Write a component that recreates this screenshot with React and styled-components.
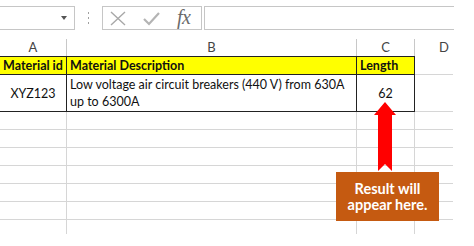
import React from "react";
import styled, { createGlobalStyle } from "styled-components";

const Global = createGlobalStyle`
  html, body { margin: 0; padding: 0; background: #fff; }
  body { font-family: Lato, "Liberation Sans", sans-serif; }
`;

const Page = styled.div`
  position: relative;
  width: 474px;
  height: 246px;
  overflow: hidden;
  background: #fff;
`;

const FormulaBar = styled.div`
  height: 39px;
  display: flex;
  align-items: flex-start;
  padding-top: 6px;
  box-sizing: border-box;
`;

const NameBox = styled.div`
  width: 75px;
  height: 24px;
  box-sizing: border-box;
  border: 1px solid #c6c6c6;
  border-left: none;
  display: flex;
  align-items: center;
  justify-content: flex-end;
  padding-right: 7px;
`;

const DropArrow = styled.span`
  width: 0;
  height: 0;
  border-left: 3.5px solid transparent;
  border-right: 3.5px solid transparent;
  border-top: 4px solid #555;
`;

const Grip = styled.div`
  width: 27px;
  height: 24px;
  display: flex;
  flex-direction: column;
  align-items: center;
  justify-content: center;
  gap: 3px;
`;

const GripDot = styled.span`
  width: 1px;
  height: 2px;
  background: #a0a0a0;
`;

const ButtonBox = styled.div`
  width: 100px;
  height: 24px;
  box-sizing: border-box;
  border: 1px solid #c6c6c6;
  display: flex;
  align-items: center;
  padding-left: 7px;
  gap: 17px;
`;

const Fx = styled.span`
  font-family: "Liberation Serif", "DejaVu Serif", serif;
  font-style: italic;
  font-size: 20px;
  color: #6b6b6b;
  line-height: 1;
  margin-left: 0px;
  margin-top: -3px;
  letter-spacing: -0.5px;
`;

const FormulaInput = styled.div`
  width: 250px;
  height: 24px;
  margin-left: 2px;
  box-sizing: border-box;
  border-top: 1px solid #c6c6c6;
  border-bottom: 1px solid #c6c6c6;
  border-left: 1px solid #c6c6c6;
`;

const Sheet = styled.div`
  display: grid;
  grid-template-columns: 67px 290px 58px 38px;
  width: 453px;
`;

const ColHead = styled.div`
  height: 17px;
  box-sizing: border-box;
  border-right: ${(p) => (p.$last ? "none" : "1px solid #c8c8c8")};
  font-size: 13px;
  color: #444;
  display: flex;
  align-items: center;
  justify-content: center;
  padding-left: ${(p) => p.$pad || 0}px;
  line-height: 1;
`;

const Cell = styled.div`
  box-sizing: border-box;
  height: ${(p) => p.$h}px;
  background: ${(p) => (p.$yellow ? "#ffff00" : "#fff")};
  border-top: ${(p) => (p.$top ? "1px solid #222" : "none")};
  border-right: ${(p) =>
    p.$noRight ? "none" : p.$darkRight ? "1px solid #222" : "1px solid #d6d6d6"};
  border-bottom: ${(p) =>
    p.$noBottom ? "none" : p.$darkBottom ? "1px solid #222" : "1px solid #d6d6d6"};
  font-size: 12.5px;
  font-weight: ${(p) => (p.$bold ? 700 : 400)};
  color: #111;
  display: flex;
  align-items: center;
  justify-content: ${(p) => (p.$center ? "center" : "flex-start")};
  padding: 0 3px;
  line-height: 17px;
  white-space: nowrap;
  overflow: hidden;
`;

const Callout = styled.div`
  position: absolute;
  left: 336px;
  top: 172px;
  width: 103px;
  height: 49px;
  background: #c55a11;
  color: #fff;
  font-weight: 700;
  font-size: 14.5px;
  line-height: 16px;
  display: flex;
  align-items: center;
  justify-content: center;
  text-align: center;
  padding-top: 1px;
  box-sizing: border-box;
`;

const ArrowSvg = styled.svg`
  position: absolute;
  left: 374px;
  top: 102px;
`;

const cols = ["A", "B", "C"];

function EmptyRow({ h, last }) {
  return (
    <>
      <Cell $h={h} $noBottom={last} />
      <Cell $h={h} $noBottom={last} />
      <Cell $h={h} $noBottom={last} />
      <Cell $h={h} $noBottom={last} $noRight />
    </>
  );
}

export default function App() {
  return (
    <Page>
      <Global />
      <FormulaBar>
        <NameBox>
          <DropArrow />
        </NameBox>
        <Grip>
          <GripDot />
          <GripDot />
          <GripDot />
        </Grip>
        <ButtonBox>
          <svg width="16" height="15" viewBox="0 0 16 15">
            <path d="M1 1 L15 14 M15 1 L1 14" stroke="#a8a8a8" strokeWidth="1.4" fill="none" />
          </svg>
          <svg width="17" height="15" viewBox="0 0 17 15">
            <path d="M1 8 L6 13 L16 2" stroke="#b4b4b4" strokeWidth="2.2" fill="none" />
          </svg>
          <Fx>fx</Fx>
        </ButtonBox>
        <FormulaInput />
      </FormulaBar>

      <Sheet>
        {cols.map((c) => (
          <ColHead key={c}>{c}</ColHead>
        ))}
        <ColHead $last $pad={20}>D</ColHead>

        <Cell $h={19} $yellow $top $bold $darkRight $darkBottom $center>
          Material id
        </Cell>
        <Cell $h={19} $yellow $top $bold $darkRight $darkBottom>
          Material Description
        </Cell>
        <Cell $h={19} $yellow $top $bold $darkRight $darkBottom>
          Length
        </Cell>
        <Cell $h={19} $noRight />

        <Cell $h={37} $darkRight $darkBottom $center>
          XYZ123
        </Cell>
        <Cell $h={37} $darkRight $darkBottom>
          <span>
            Low voltage air circuit breakers (440 V) from 630A
            <br />
            up to 6300A
          </span>
        </Cell>
        <Cell $h={37} $darkRight $darkBottom $center>
          62
        </Cell>
        <Cell $h={37} $noRight />

        <EmptyRow h={18} />
        <EmptyRow h={18} />
        <EmptyRow h={18} />
        <EmptyRow h={18} />
        <EmptyRow h={18} />
        <EmptyRow h={18} />
        <EmptyRow h={14} last />
      </Sheet>

      <ArrowSvg width="22" height="70" viewBox="0 0 22 70">
        <path d="M11 0 L22 13 L18 13 L18 69 L11 62 L4 69 L4 13 L0 13 Z" fill="#ff0000" />
      </ArrowSvg>
      <Callout>
        Result will
        <br />
        appear here.
      </Callout>
    </Page>
  );
}
